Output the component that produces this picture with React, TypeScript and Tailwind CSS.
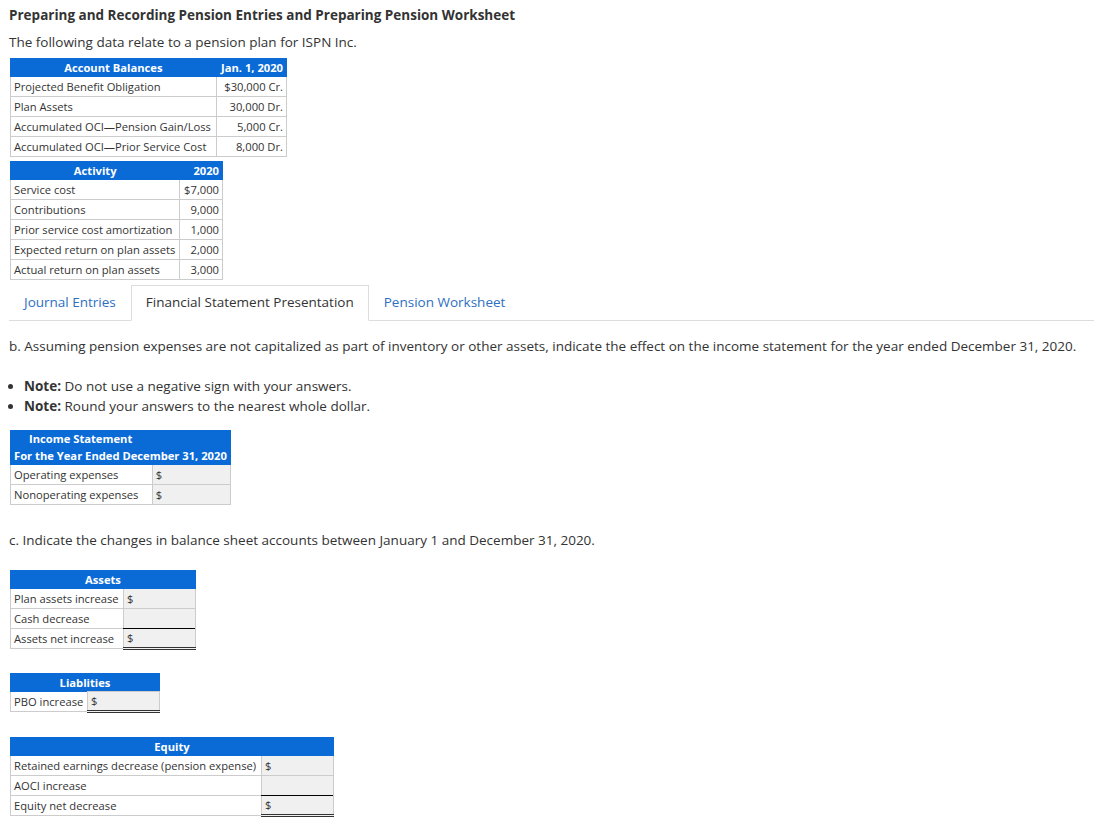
const font = { fontFamily: '"Open Sans", "Noto Sans", sans-serif' };

type Row = [string, string];

const balances: Row[] = [
  ["Projected Benefit Obligation", "$30,000 Cr."],
  ["Plan Assets", "30,000 Dr."],
  ["Accumulated OCI\u2014Pension Gain/Loss", "5,000 Cr."],
  ["Accumulated OCI\u2014Prior Service Cost", "8,000 Dr."],
];

const activity: Row[] = [
  ["Service cost", "$7,000"],
  ["Contributions", "9,000"],
  ["Prior service cost amortization", "1,000"],
  ["Expected return on plan assets", "2,000"],
  ["Actual return on plan assets", "3,000"],
];

const cell = "border border-[#cccccc] px-[3px] h-[20px] text-[11.2px] leading-[16px] text-[#333333] whitespace-nowrap";
const head = "bg-[#0b6bd6] text-white font-bold text-[11.2px] leading-[15px] h-[18px] px-[3px] border border-[#0b6bd6]";
const input = "border border-[#cccccc] bg-[#f0f0f0] px-[3px] text-[11.2px] leading-[16px] text-[#333333]";

function DataTable({ title, col, rows, w1, w2, mt }: { title: string; col: string; rows: Row[]; w1: number; w2: number; mt: string }) {
  return (
    <table className={`border-collapse ${mt}`} style={{ width: w1 + w2 }}>
      <thead>
        <tr>
          <th className={`${head} text-center`} style={{ width: w1 }}>{title}</th>
          <th className={`${head} text-right`} style={{ width: w2 }}>{col}</th>
        </tr>
      </thead>
      <tbody>
        {rows.map(([a, b]) => (
          <tr key={a}>
            <td className={`${cell} text-left`}>{a}</td>
            <td className={`${cell} text-right`}>{b}</td>
          </tr>
        ))}
      </tbody>
    </table>
  );
}

type Line = { label: string; dollar: boolean; top?: boolean; dbl?: boolean };

function AnswerTable({ title, lines, w1, w2 }: { title: React.ReactNode; lines: Line[]; w1: number; w2: number }) {
  return (
    <table className="border-collapse" style={{ width: w1 + w2 }}>
      <thead>
        <tr>
          <th colSpan={2} className={`${head} text-center`}>{title}</th>
        </tr>
      </thead>
      <tbody>
        {lines.map((l) => (
          <tr key={l.label}>
            <td className={`${cell} text-left ${l.dbl ? "h-[18px]" : ""}`} style={{ width: w1 }}>{l.label}</td>
            <td
              className={`${input} text-left ${l.dbl ? "h-[18px]" : "h-[20px]"} ${l.top ? "border-t-[#000000]" : ""} ${l.dbl ? "border-b-[3px] border-b-[#333333] border-double" : ""}`}
              style={{ width: w2 }}
            >
              {l.dollar ? "$" : ""}
            </td>
          </tr>
        ))}
      </tbody>
    </table>
  );
}

export default function App() {
  return (
    <div className="w-[1094px] bg-white pb-[20px]" style={font}>
      <div className="pl-[9px]">
        <h1 className="pt-[5px] text-[13.5px] leading-[20px] font-bold text-[#333333]">
          Preparing and Recording Pension Entries and Preparing Pension Worksheet
        </h1>
        <p className="mt-[7px] text-[13.5px] leading-[20px] text-[#333333]">
          The following data relate to a pension plan for ISPN Inc.
        </p>
        <div className="pl-[1px]">
          <DataTable title="Account Balances" col="Jan. 1, 2020" rows={balances} w1={206} w2={71} mt="mt-[6px]" />
          <DataTable title="Activity" col="2020" rows={activity} w1={170} w2={43} mt="mt-[4px]" />
        </div>
      </div>

      <div className="mt-[5px] flex border-b border-[#dddddd] ml-[9px] text-[13.5px] leading-[20px]">
        <div className="px-[14px] pt-[6px] pb-[7px] border border-transparent text-[#2d6fc2]">Journal Entries</div>
        <div className="px-[14px] pt-[6px] pb-[7px] border border-[#dddddd] border-b-white -mb-[1px] bg-white text-[#333333]">
          Financial Statement Presentation
        </div>
        <div className="px-[14px] pt-[6px] pb-[7px] border border-transparent text-[#2d6fc2]">Pension Worksheet</div>
      </div>

      <div className="pl-[9px] text-[13.5px] leading-[20px] text-[#333333]">
        <p className="mt-[15px]">
          b. Assuming pension expenses are not capitalized as part of inventory or other assets, indicate the effect on the income statement for the year ended December 31, 2020.
        </p>
        <ul className="mt-[20px] list-disc pl-[15px]">
          <li><b>Note:</b> Do not use a negative sign with your answers.</li>
          <li><b>Note:</b> Round your answers to the nearest whole dollar.</li>
        </ul>
        <div className="mt-[14px] pl-[1px]">
          <AnswerTable
            title={
              <div className="text-left leading-[16.5px]">
                <div className="pl-[15px]">Income Statement</div>
                <div>For the Year Ended December 31, 2020</div>
              </div>
            }
            lines={[
              { label: "Operating expenses", dollar: true },
              { label: "Nonoperating expenses", dollar: true },
            ]}
            w1={142}
            w2={79}
          />
        </div>
        <p className="mt-[25px]">c. Indicate the changes in balance sheet accounts between January 1 and December 31, 2020.</p>
        <div className="mt-[20px] pl-[1px]">
          <AnswerTable
            title="Assets"
            lines={[
              { label: "Plan assets increase", dollar: true },
              { label: "Cash decrease", dollar: false },
              { label: "Assets net increase", dollar: true, top: true, dbl: true },
            ]}
            w1={113}
            w2={73}
          />
        </div>
        <div className="mt-[23px] pl-[1px]">
          <AnswerTable title="Liablities" lines={[{ label: "PBO increase", dollar: true, dbl: true }]} w1={77} w2={73} />
        </div>
        <div className="mt-[24px] pl-[1px]">
          <AnswerTable
            title="Equity"
            lines={[
              { label: "Retained earnings decrease (pension expense)", dollar: true },
              { label: "AOCI increase", dollar: false },
              { label: "Equity net decrease", dollar: true, top: true, dbl: true },
            ]}
            w1={251}
            w2={73}
          />
        </div>
      </div>
    </div>
  );
}
